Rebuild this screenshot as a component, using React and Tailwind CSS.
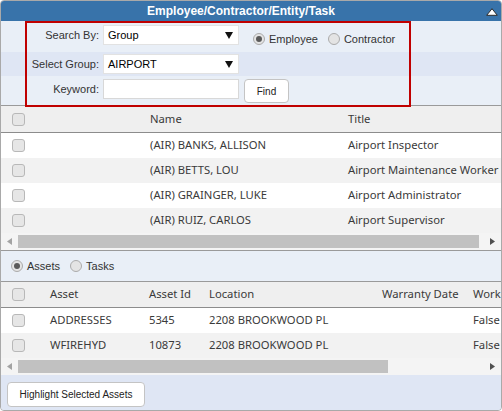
import React from 'react';

const arial = "font-['Liberation_Sans',Arial,sans-serif]";
const segoe = "font-['Noto_Sans',sans-serif]";

const Checkbox = () => (
  <span className="block w-[13px] h-[13px] rounded-[3px] border border-[#b8b8b8] bg-[#e6e6e6]" />
);

const Radio = ({ checked }) => (
  <span className="flex items-center justify-center w-[12px] h-[12px] rounded-full border border-[#ababab] bg-[#e4e4e4]">
    {checked && <span className="block w-[6px] h-[6px] rounded-full bg-[#5a5a5a]" />}
  </span>
);

const SelectBox = ({ value }) => (
  <div className="w-[136px] h-[20px] bg-white border border-[#e2e2e2] flex items-center justify-between pl-[4px] pr-[5px] text-[11px] text-black">
    <span>{value}</span>
    <svg width="8" height="7" viewBox="0 0 8 7">
      <polygon points="0,0 8,0 4,7" fill="#111" />
    </svg>
  </div>
);

const Scrollbar = ({ thumb }) => (
  <div className="h-[17px] bg-[#f4f4f4] flex items-center pl-[6px] pr-[6px]">
    <svg width="5" height="7" viewBox="0 0 5 7">
      <polygon points="5,0 5,7 0,3.5" fill="#a3a3a3" />
    </svg>
    <div className="ml-[6px] h-[13px] bg-[#c1c1c1]" style={{ width: thumb }} />
    <div className="flex-1" />
    <svg width="5" height="7" viewBox="0 0 5 7">
      <polygon points="0,0 0,7 5,3.5" fill="#505050" />
    </svg>
  </div>
);

const people = [
  ['(AIR) BANKS, ALLISON', 'Airport Inspector'],
  ['(AIR) BETTS, LOU', 'Airport Maintenance Worker'],
  ['(AIR) GRAINGER, LUKE', 'Airport Administrator'],
  ['(AIR) RUIZ, CARLOS', 'Airport Supervisor'],
];

const assets = [
  ['ADDRESSES', '5345', '2208 BROOKWOOD PL', '', 'False'],
  ['WFIREHYD', '10873', '2208 BROOKWOOD PL', '', 'False'],
];

const App = () => {
  return (
    <div className="w-[502px] h-[411px] relative border border-[#a9a9a9] rounded-[4px] overflow-hidden flex flex-col bg-[#e9eff7] text-[#333]">
      {/* title bar */}
      <div className={`h-[20px] shrink-0 bg-[#3873aa] flex items-center justify-center relative pr-[20px] ${arial}`}>
        <span className="text-white font-bold text-[12px]">Employee/Contractor/Entity/Task</span>
        <svg className="absolute right-[3px] top-[7px]" width="12" height="8" viewBox="0 0 12 8">
          <polygon points="6,0.7 11.3,7.3 0.7,7.3" fill="#fff" stroke="#2b2b2b" strokeWidth="1" />
        </svg>
      </div>

      {/* search form */}
      <div className={`shrink-0 ${arial} text-[11px]`}>
        <div className="h-[31px] flex items-start pt-[4px]">
          <div className="w-[98px] text-right h-[20px] leading-[20px]">Search By:</div>
          <div className="ml-[4px]">
            <SelectBox value="Group" />
          </div>
          <div className="ml-[14px] flex items-center gap-[4px] pt-[8px] h-[20px]">
            <Radio checked />
            <span className="mr-[6px]">Employee</span>
            <Radio />
            <span>Contractor</span>
          </div>
        </div>
        <div className="h-[24px] flex items-center bg-[#dfe6f4]">
          <div className="w-[98px] text-right">Select Group:</div>
          <div className="ml-[4px]">
            <SelectBox value="AIRPORT" />
          </div>
        </div>
        <div className="h-[29px] flex items-start pt-[3px]">
          <div className="w-[98px] text-right h-[20px] leading-[20px]">Keyword:</div>
          <input className="ml-[4px] w-[136px] h-[20px] bg-white border border-[#d8d8d8] outline-none" />
          <button className="ml-[5px] w-[45px] h-[24px] bg-white border border-[#c4c4c4] rounded-[4px] text-[10px] text-[#222]">
            Find
          </button>
        </div>
      </div>

      {/* employee table */}
      <div className={`shrink-0 border-t border-[#9a9a9a] ${segoe} text-[11.25px] text-[#3a3a3a]`}>
        <div className="h-[27px] bg-[#efefef] border-b border-[#8c8c8c] grid grid-cols-[149px_198px_1fr] items-center whitespace-nowrap">
          <div className="pl-[11px]"><Checkbox /></div>
          <div>Name</div>
          <div>Title</div>
        </div>
        {people.map((p, i) => (
          <div
            key={p[0]}
            className={`h-[25px] grid grid-cols-[149px_198px_1fr] items-center whitespace-nowrap overflow-hidden ${i % 2 === 0 ? 'bg-white' : 'bg-[#f2f2f2]'}`}
          >
            <div className="pl-[11px]"><Checkbox /></div>
            <div>{p[0]}</div>
            <div>{p[1]}</div>
          </div>
        ))}
        <Scrollbar thumb={461} />
      </div>

      {/* assets / tasks */}
      <div className={`h-[31px] shrink-0 border-t border-[#9a9a9a] flex items-center pl-[10px] gap-[4px] text-[11px] ${arial}`}>
        <Radio checked />
        <span className="mr-[6px]">Assets</span>
        <Radio />
        <span>Tasks</span>
      </div>

      {/* asset table */}
      <div className={`shrink-0 border-t border-[#9a9a9a] ${segoe} text-[11.25px] text-[#3a3a3a]`}>
        <div className="h-[26px] bg-[#efefef] border-b border-[#8c8c8c] grid grid-cols-[49px_99px_60px_173px_91px_1fr] items-center whitespace-nowrap overflow-hidden">
          <div className="pl-[11px]"><Checkbox /></div>
          <div>Asset</div>
          <div>Asset Id</div>
          <div>Location</div>
          <div>Warranty Date</div>
          <div>Work</div>
        </div>
        {assets.map((a, i) => (
          <div
            key={a[0]}
            className={`h-[25px] grid grid-cols-[49px_99px_60px_173px_91px_1fr] items-center whitespace-nowrap overflow-hidden ${i % 2 === 0 ? 'bg-white' : 'bg-[#f2f2f2]'}`}
          >
            <div className="pl-[11px]"><Checkbox /></div>
            <div>{a[0]}</div>
            <div>{a[1]}</div>
            <div>{a[2]}</div>
            <div>{a[3]}</div>
            <div>{a[4]}</div>
          </div>
        ))}
        <Scrollbar thumb={370} />
      </div>

      {/* footer */}
      <div className={`flex-1 bg-[#dfe6f4] pl-[6px] pt-[6px] ${arial}`}>
        <button className="w-[138px] h-[25px] bg-white border border-[#c4c4c4] rounded-[4px] text-[10px] text-[#222]">
          Highlight Selected Assets
        </button>
      </div>

      {/* highlight outline */}
      <div className="absolute left-[24px] top-[20px] w-[386px] h-[86px] border-2 border-[#c00000] pointer-events-none" />
    </div>
  );
};

export default App;
